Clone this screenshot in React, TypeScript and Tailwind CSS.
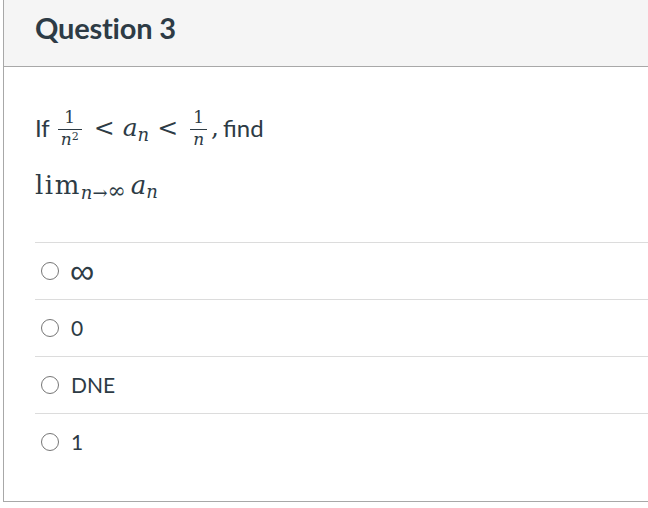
import React from "react";

const serif = { fontFamily: '"DejaVu Serif", "Liberation Serif", serif' };

function Frac({ num, den }: { num: React.ReactNode; den: React.ReactNode }) {
  return (
    <span className="inline-flex flex-col items-center align-middle mx-[4px] text-[17px] leading-[17px]" style={serif}>
      <span className="px-[3px] pb-[3px]">{num}</span>
      <span className="block w-full border-t border-[#2d3b45]" />
      <span className="px-[3px] pt-[1px] italic">{den}</span>
    </span>
  );
}

function Option({ label, big }: { label: string; big?: boolean }) {
  return (
    <div className="h-[57px] border-t border-[#dcdcdc] flex items-center">
      <span className="ml-[6px] w-[18px] h-[18px] rounded-full border-[1.5px] border-[#767676] bg-white shrink-0" />
      {big ? (
        <span className="ml-[11px] h-[24px] flex items-center text-[34px] leading-none text-[#2d3b45]" style={{ fontFamily: '"Liberation Sans", sans-serif' }}>
          {label}
        </span>
      ) : (
        <span className="ml-[12px] text-[21px] text-[#2d3b45]">{label}</span>
      )}
    </div>
  );
}

export default function App() {
  return (
    <div className="w-[648px] h-[508px] bg-white overflow-hidden" style={{ fontFamily: 'Lato, "Noto Sans", sans-serif' }}>
      <div className="ml-[3px] h-[502px] border-l border-b border-[#a8a8a8] flex flex-col">
        <div className="h-[67px] shrink-0 bg-[#f5f5f5] border-b border-[#a8a8a8] pl-[31px] pt-[13px]">
          <h2 className="text-[29px] leading-none font-bold text-[#2d3b45] tracking-[-0.2px]">Question 3</h2>
        </div>
        <div className="pl-[31px] text-[#2d3b45]">
          <div className="mt-[43px] h-[36px] flex items-center text-[24px]">
            <span>If</span>
            <span className="ml-[4px]">
              <Frac num="1" den={<>n<sup className="not-italic text-[11px]">2</sup></>} />
            </span>
            <span className="mx-[8px] text-[25px]" style={serif}>&lt;</span>
            <span className="italic text-[25px]" style={serif}>
              a<sub className="text-[18px]">n</sub>
            </span>
            <span className="mx-[8px] text-[25px]" style={serif}>&lt;</span>
            <Frac num="1" den="n" />
            <span className="text-[25px]" style={serif}>,</span>
            <span className="ml-[4px]">find</span>
          </div>
          <div className="mt-[21px] h-[36px] flex items-center text-[26px]" style={serif}>
            <span className="tracking-[1.5px]">lim</span>
            <span className="italic text-[18px] relative top-[7px]">n</span>
            <span className="text-[18px] relative top-[7px]">→</span>
            <span className="text-[22px] leading-none relative top-[6px]">∞</span>
            <span className="italic ml-[5px]">
              a<sub className="text-[18px]">n</sub>
            </span>
          </div>
          <div className="mt-[39px]">
            <Option label="∞" big />
            <Option label="0" />
            <Option label="DNE" />
            <Option label="1" />
          </div>
        </div>
      </div>
    </div>
  );
}
